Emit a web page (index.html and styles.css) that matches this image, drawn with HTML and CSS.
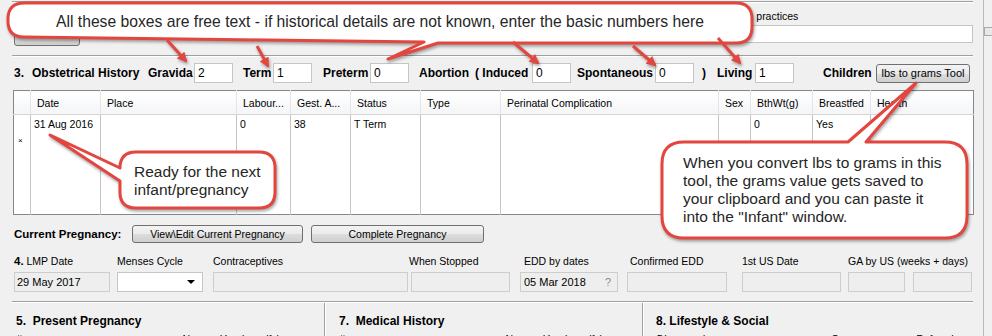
FILE: index.html
```html
<!DOCTYPE html>
<html lang="en">
<head>
  <meta charset="UTF-8">
  <title>Obstetrical History</title>
  <link rel="stylesheet" href="styles.css">
</head>
<body>
  <div class="app">
    <main class="form">
      <div class="etch etch-top"></div>
      <section class="prev">
        <button class="btn btn-prev" aria-label="Add"></button>
        <div class="prev-field">
          <div class="prev-label">Cultural beliefs &amp; practices</div>
          <div class="box prev-box"></div>
        </div>
      </section>
      <div class="etch"></div>

      <section class="obst">
        <span class="h w-num">3.</span>
        <span class="h w-title">Obstetrical History</span>
        <span class="h w-grav">Gravida</span><span class="box nbox">2</span>
        <span class="h w-term">Term</span><span class="box nbox">1</span>
        <span class="h w-pre">Preterm</span><span class="box nbox">0</span>
        <span class="h w-abo">Abortion</span>
        <span class="h w-ind">( Induced</span><span class="box nbox">0</span>
        <span class="h w-spo">Spontaneous</span><span class="box nbox">0</span>
        <span class="h w-par">)</span>
        <span class="h w-liv">Living</span><span class="box nbox">1</span>
        <span class="h w-chi">Children</span>
        <button class="btn btn-tool">lbs to grams Tool</button>
      </section>

      <table class="grid">
        <colgroup>
          <col class="c-ind"><col class="c-date"><col class="c-place"><col class="c-lab">
          <col class="c-gest"><col class="c-stat"><col class="c-type"><col class="c-peri">
          <col class="c-sex"><col class="c-wt"><col class="c-bf"><col class="c-hl">
        </colgroup>
        <thead>
          <tr>
            <th></th><th>Date</th><th>Place</th><th>Labour...</th><th>Gest. A...</th><th>Status</th>
            <th>Type</th><th>Perinatal Complication</th><th>Sex</th><th>BthWt(g)</th><th>Breastfed</th><th>Health</th>
          </tr>
        </thead>
        <tbody>
          <tr class="row-data">
            <td></td><td>31 Aug 2016</td><td></td><td>0</td><td>38</td><td>T Term</td>
            <td></td><td></td><td></td><td>0</td><td>Yes</td><td></td>
          </tr>
          <tr class="row-new">
            <td class="ind">×</td><td></td><td></td><td></td><td></td><td></td>
            <td></td><td></td><td></td><td></td><td></td><td></td>
          </tr>
        </tbody>
      </table>

      <section class="cur">
        <span class="cur-label">Current Pregnancy:</span>
        <button class="btn btn-view">View\Edit Current Pregnancy</button>
        <button class="btn btn-done">Complete Pregnancy</button>
      </section>

      <section class="fields">
        <div class="field f-lmp">
          <div class="flabel"><b>4.</b> LMP Date</div>
          <div class="box dis">29 May 2017</div>
        </div>
        <div class="field f-men">
          <div class="flabel">Menses Cycle</div>
          <div class="box sel"><span class="caret"></span></div>
        </div>
        <div class="field f-con">
          <div class="flabel">Contraceptives</div>
          <div class="box dis"></div>
        </div>
        <div class="field f-stop">
          <div class="flabel">When Stopped</div>
          <div class="box dis"></div>
        </div>
        <div class="field f-edd">
          <div class="flabel">EDD by dates</div>
          <div class="box dis split"><span>05 Mar 2018</span><span class="q">?</span></div>
        </div>
        <div class="field f-cedd">
          <div class="flabel">Confirmed EDD</div>
          <div class="box dis"></div>
        </div>
        <div class="field f-us">
          <div class="flabel">1st US Date</div>
          <div class="box dis"></div>
        </div>
        <div class="field f-ga">
          <div class="flabel">GA by US (weeks + days)</div>
          <div class="pair"><div class="box dis"></div><div class="box dis"></div></div>
        </div>
      </section>

      <div class="etch etch-mid"></div>

      <section class="cols">
        <div class="col col-5">
          <div class="sec-title">5.&nbsp; Present Pregnancy</div>
          <div class="cut"><span>#</span><span class="cut-no">No</span><span>Yes (specify)</span></div>
        </div>
        <div class="col col-7">
          <div class="sec-title">7.&nbsp; Medical History</div>
          <div class="cut"><span>#</span><span class="cut-no">No</span><span>Yes (specify)</span></div>
        </div>
        <div class="col col-8">
          <div class="sec-title">8. Lifestyle &amp; Social</div>
          <div class="cut"><span>Discussed</span><span class="cut-mid">Concerns</span><span>Referral</span></div>
        </div>
      </section>
    </main>
    <div class="vscroll"><div class="thumb"></div></div>
  </div>

  <svg class="overlay" width="992" height="336" viewBox="0 0 992 336">
    <defs>
      <marker id="head" viewBox="0 0 10 10" refX="8" refY="5" markerWidth="11" markerHeight="10"
              markerUnits="userSpaceOnUse" orient="auto">
        <path d="M0 0 L10 5 L0 10 Z" fill="#e2463f"/>
      </marker>
    </defs>
    <g class="bubble">
      <path d="M24 3 H736 Q752 3 752 19 V27 Q752 43 736 43 H438 L388 59 L424 42 L24 37 Q8 37 8 21 V19 Q8 3 24 3 Z"/>
      <path d="M136 152 H259 Q275 152 275 168 V192 Q275 208 259 208 H136 Q120 208 120 192 V181 L50 135 L120 168 Q120 152 136 152 Z"/>
      <path d="M684 142 H848 L916 83 L866 142 H945 Q967 142 967 164 V216 Q967 238 945 238 H684 Q662 238 662 216 V164 Q662 142 684 142 Z"/>
    </g>
    <g class="arrows">
      <line x1="167" y1="40" x2="186" y2="61"/>
      <line x1="257" y1="46" x2="268" y2="66"/>
      <line x1="513" y1="42" x2="538" y2="63"/>
      <line x1="633" y1="46" x2="655" y2="65"/>
      <line x1="718" y1="38" x2="740" y2="63"/>
    </g>
  </svg>

  <div class="note note-top">All these boxes are free text - if historical details are not known, enter the basic numbers here</div>
  <div class="note note-ready">Ready for the next<br>infant/pregnancy</div>
  <div class="note note-tool">When you convert lbs to grams in this<br>tool, the grams value gets saved to<br>your clipboard and you can paste it<br>into the "Infant" window.</div>
</body>
</html>
```

FILE: styles.css
```css
* {
  box-sizing: border-box;
}
body {
  margin: 0;
  width: 992px;
  height: 336px;
  overflow: hidden;
  position: relative;
  background: #f0f0f0;
  font-family: "Liberation Sans", Arial, sans-serif;
  font-size: 10.5px;
  color: #000;
}
.app {
  display: flex;
  height: 336px;
}
.form {
  width: 983px;
  padding: 0 10px 0 12px;
}
.vscroll {
  width: 9px;
  border-left: 1px solid #b9b9b9;
  padding-top: 27px;
}
.thumb {
  height: 9px;
  border: 1px solid #a9a9a9;
  border-right: none;
  background: #e8e8e8;
}

/* etched separators */
.etch {
  height: 2px;
  border-top: 1px solid #a0a0a0;
  border-bottom: 1px solid #fff;
}
.etch-top {
  margin-top: 1px;
}
.etch-mid {
  margin-top: 9px;
}

/* generic controls */
.box {
  display: flex;
  align-items: center;
  height: 20px;
  padding-left: 3px;
  background: #fff;
  border: 1px solid #c6c6c6;
}
.box.dis {
  background: #eeeeee;
  border-color: #cdcdcd;
}
.btn {
  height: 18px;
  padding: 0;
  font-family: inherit;
  font-size: 10.5px;
  color: #000;
  border: 1px solid #707070;
  border-radius: 3px;
  background: linear-gradient(#f3f3f3 0%, #ebebeb 50%, #dddddd 51%, #cfcfcf 100%);
}

/* previous section, mostly hidden */
.prev {
  display: flex;
  justify-content: space-between;
  height: 52px;
}
.btn-prev {
  width: 66px;
  height: 20px;
  margin: 23px 0 0 2px;
}
.prev-field {
  width: 299px;
  padding-top: 7px;
}
.prev-label {
  line-height: 13px;
  margin-bottom: 2px;
}
.prev-box {
  height: 18px;
}

/* 3. obstetrical history row */
.obst {
  display: flex;
  align-items: center;
  height: 20px;
  margin-top: 6px;
}
.h {
  font-weight: bold;
  font-size: 12px;
  white-space: nowrap;
}
.nbox {
  width: 39px;
  font-size: 12px;
}
.w-num { width: 18px; margin-left: 2px; }
.w-title { width: 116px; }
.w-grav { width: 46px; }
.w-term { width: 30px; margin-left: 10px; }
.w-pre { width: 47px; margin-left: 11px; }
.w-abo { width: 56px; margin-left: 10px; }
.w-ind { width: 57px; }
.w-spo { width: 78px; margin-left: 6px; }
.w-par { width: 15px; margin-left: 8px; }
.w-liv { width: 38px; }
.w-chi { width: 53px; margin-left: 29px; }
.btn-tool {
  width: 94px;
  height: 19px;
  font-size: 11px;
}

/* pregnancy grid */
.grid {
  width: 960px;
  height: 125px;
  margin: 7px 0 0 1px;
  table-layout: fixed;
  border-collapse: collapse;
  border: 1px solid #828790;
  background: #fff;
}
.c-ind { width: 17px; }
.c-date { width: 70px; }
.c-place { width: 136px; }
.c-lab { width: 54px; }
.c-gest { width: 60px; }
.c-stat { width: 70px; }
.c-type { width: 80px; }
.c-peri { width: 218px; }
.c-sex { width: 32px; }
.c-wt { width: 62px; }
.c-bf { width: 58px; }
.c-hl { width: 103px; }
.grid th {
  height: 24px;
  padding: 0 0 0 6px;
  font-weight: normal;
  text-align: left;
  white-space: nowrap;
  overflow: hidden;
  background: linear-gradient(#ffffff, #f4f5f7);
  border-right: 1px solid #e3e5e8;
  border-bottom: 1px solid #d5d5d5;
}
.grid th:last-child {
  border-right: none;
}
.grid td {
  padding: 0 0 0 3px;
  vertical-align: top;
  border-right: 1px solid #c5c5c5;
  white-space: nowrap;
}
.grid td:last-child {
  border-right: none;
}
.row-data td {
  height: 17px;
  padding-top: 3px;
}
.row-new td.ind {
  padding: 4px 0 0 4px;
  font-size: 8px;
}

/* current pregnancy */
.cur {
  display: flex;
  align-items: center;
  height: 18px;
  margin-top: 10px;
}
.cur-label {
  width: 118px;
  margin-left: 2px;
  font-weight: bold;
  font-size: 11.5px;
}
.btn-view { width: 171px; }
.btn-done { width: 173px; margin-left: 8px; }

/* 4. dates */
.fields {
  display: flex;
  margin-top: 11px;
}
.flabel {
  line-height: 14px;
  margin-bottom: 4px;
  white-space: nowrap;
}
.flabel b {
  font-size: 11.5px;
}
.f-lmp { width: 96px; margin-left: 2px; }
.f-men { width: 86px; margin-left: 7px; }
.f-con { width: 195px; margin-left: 10px; }
.f-stop { width: 99px; margin-left: 3px; }
.f-stop .flabel { margin-left: -2px; }
.f-edd { width: 98px; margin-left: 10px; }
.f-edd .flabel { padding-left: 4px; }
.f-cedd { width: 100px; margin-left: 9px; }
.f-cedd .flabel { padding-left: 3px; }
.f-us { width: 99px; margin-left: 15px; }
.f-ga { width: 124px; margin-left: 7px; }
.f-lmp .box {
  padding-left: 2px;
  font-size: 11px;
}
.sel {
  justify-content: flex-end;
  padding-right: 7px;
}
.caret {
  width: 0;
  height: 0;
  border-left: 4px solid transparent;
  border-right: 4px solid transparent;
  border-top: 4px solid #000;
}
.split {
  justify-content: space-between;
  padding-right: 6px;
  font-size: 11px;
}
.q {
  color: #8a8a8a;
}
.pair {
  display: flex;
  gap: 8px;
}
.pair .box:first-child { width: 57px; }
.pair .box:last-child { width: 59px; }

/* lower sections */
.cols {
  display: flex;
  height: 40px;
}
.col {
  padding-top: 11px;
}
.col-5 {
  width: 313px;
  padding-left: 4px;
  border-right: 1px solid #a0a0a0;
}
.col-7 {
  width: 318px;
  padding-left: 13px;
  border-left: 1px solid #fff;
  border-right: 1px solid #a0a0a0;
}
.col-8 {
  flex: 1;
  padding-left: 12px;
  border-left: 1px solid #fff;
}
.sec-title {
  font-weight: bold;
  font-size: 12px;
  line-height: 14px;
}
.cut {
  display: flex;
  margin-top: 5px;
  font-style: italic;
  white-space: nowrap;
}
.cut-no {
  margin: 0 24px 0 160px;
}
.cut-mid {
  margin: 0 40px 0 126px;
}

/* callout overlay */
.overlay {
  position: absolute;
  left: 0;
  top: 0;
  pointer-events: none;
  filter: drop-shadow(1px 2px 1.5px rgba(0, 0, 0, 0.35));
}
.bubble path {
  fill: #fff;
  stroke: #e2463f;
  stroke-width: 3;
  stroke-linejoin: round;
}
.arrows line {
  stroke: #e2463f;
  stroke-width: 3;
  marker-end: url(#head);
}
.note {
  position: absolute;
  font-family: "Liberation Sans", Arial, sans-serif;
  font-size: 15.5px;
  line-height: 18px;
  color: #262626;
  white-space: nowrap;
}
.note-top {
  left: 56px;
  top: 13px;
  font-size: 15.7px;
}
.note-ready {
  left: 134px;
  top: 163px;
}
.note-tool {
  left: 683px;
  top: 154px;
}
```
